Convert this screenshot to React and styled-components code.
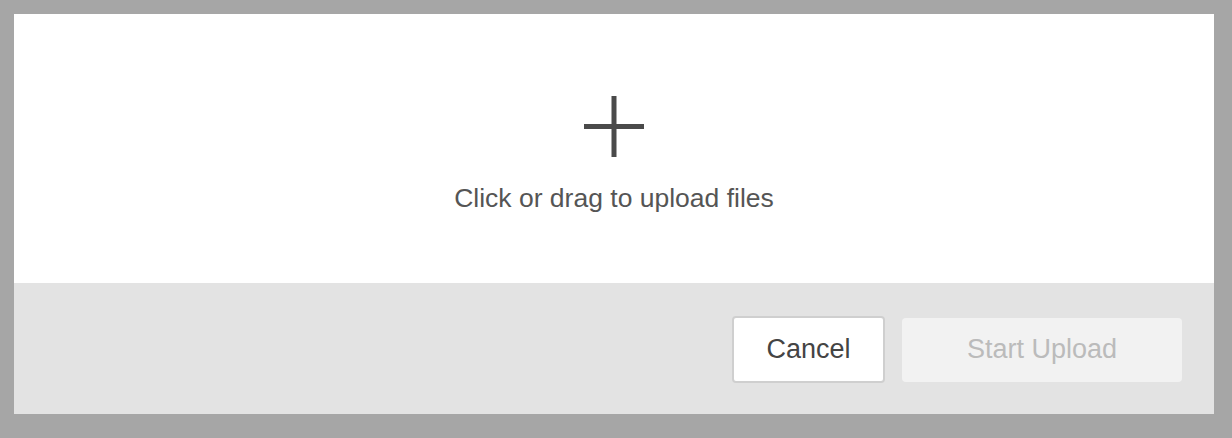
import React from 'react';
import styled, { createGlobalStyle } from 'styled-components';

const GlobalStyle = createGlobalStyle`
  html, body {
    margin: 0;
    padding: 0;
    background: #a6a6a6;
    font-family: "Liberation Sans", Arial, sans-serif;
  }
`;

const Page = styled.div`
  width: 1232px;
  height: 438px;
  padding: 14px 18px 24px 14px;
  box-sizing: border-box;
`;

const Panel = styled.div`
  width: 1200px;
  height: 400px;
  display: flex;
  flex-direction: column;
`;

const DropZone = styled.div`
  height: 269px;
  background: #fff;
  display: flex;
  flex-direction: column;
  align-items: center;
  padding-top: 82px;
  box-sizing: border-box;
  cursor: pointer;
`;

const PlusIcon = styled.svg`
  width: 60px;
  height: 61px;
  display: block;
`;

const Hint = styled.div`
  margin-top: 26px;
  font-size: 26.5px;
  line-height: 30px;
  color: #555;
`;

const Footer = styled.div`
  flex: 1;
  background: #e3e3e3;
  display: flex;
  justify-content: flex-end;
  align-items: center;
  gap: 17px;
  padding: 2px 32px 0 0;
`;

const Button = styled.button`
  height: ${(p) => (p.$primary ? '64px' : '67px')};
  width: ${(p) => (p.$primary ? '280px' : '153px')};
  border-radius: 4px;
  border: ${(p) => (p.$primary ? 'none' : '2px solid #cfcfcf')};
  background: ${(p) => (p.$primary ? '#f2f2f2' : '#fff')};
  color: ${(p) => (p.$primary ? '#bbbbbb' : '#444')};
  font-family: "Liberation Sans", Arial, sans-serif;
  font-size: 27px;
  padding: 0;
  cursor: ${(p) => (p.disabled ? 'default' : 'pointer')};
`;

export default function App() {
  return (
    <Page>
      <GlobalStyle />
      <Panel>
        <DropZone>
          <PlusIcon viewBox="0 0 60 61">
            <path d="M30 0 V61 M0 30.5 H60" stroke="#4a4a4a" strokeWidth="5" fill="none" />
          </PlusIcon>
          <Hint>Click or drag to upload files</Hint>
        </DropZone>
        <Footer>
          <Button>Cancel</Button>
          <Button $primary disabled>Start Upload</Button>
        </Footer>
      </Panel>
    </Page>
  );
}
